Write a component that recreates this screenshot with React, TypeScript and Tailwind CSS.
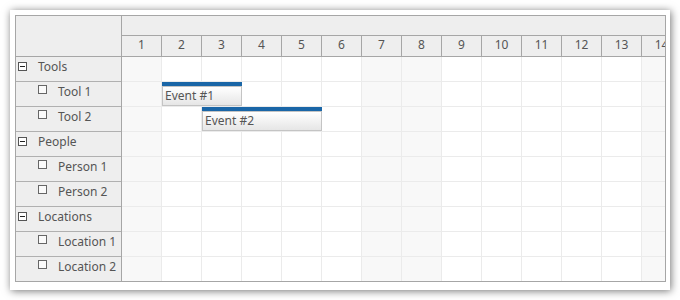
const days = [1, 2, 3, 4, 5, 6, 7, 8, 9, 10, 11, 12, 13, 14];
const weekend = [1, 7, 8, 14];

type Row = { name: string; group?: boolean };

const rows: Row[] = [
  { name: "Tools", group: true },
  { name: "Tool 1" },
  { name: "Tool 2" },
  { name: "People", group: true },
  { name: "Person 1" },
  { name: "Person 2" },
  { name: "Locations", group: true },
  { name: "Location 1" },
  { name: "Location 2" },
];

const events = [
  { text: "Event #1", row: 1, start: 1, days: 2 },
  { text: "Event #2", row: 2, start: 2, days: 3 },
];

function Collapse() {
  return (
    <svg width="9" height="9" viewBox="0 0 9 9" className="mt-[5px] shrink-0">
      <rect x="0.5" y="0.5" width="8" height="8" fill="#fff" stroke="#555" />
      <line x1="2" y1="4.5" x2="7" y2="4.5" stroke="#222" />
    </svg>
  );
}

function Leaf() {
  return (
    <svg width="9" height="9" viewBox="0 0 9 9" className="mt-[3px] shrink-0">
      <rect x="0.5" y="0.5" width="8" height="8" fill="#fafafa" stroke="#666" />
    </svg>
  );
}

export default function App() {
  return (
    <div className="min-h-screen bg-white pt-[10px] pl-[10px]">
      <div className="w-fit bg-white pl-[5px] pt-[5px] pr-[4px] pb-[8px] shadow-[1px_1px_8px_rgba(0,0,0,0.55)]">
        <div className="flex w-[651px] overflow-hidden border border-[#a6a6a6] font-['Noto_Sans',sans-serif] text-[12px] leading-[16px] text-[#555]">
          {/* row headers */}
          <div className="w-[106px] shrink-0 border-r border-[#a6a6a6] bg-[#eeeeee]">
            <div className="h-[41px] border-b border-[#a6a6a6]" />
            {rows.map((r, i) => (
              <div
                key={r.name}
                className={
                  i === rows.length - 1
                    ? "flex h-[24px] items-start"
                    : "flex h-[25px] items-start border-b border-[#b0b0b0]"
                }
              >
                {r.group ? (
                  <div className="flex pl-[2px]">
                    <Collapse />
                    <span className="ml-[11px] pt-[2px]">{r.name}</span>
                  </div>
                ) : (
                  <div className="flex pl-[22px]">
                    <Leaf />
                    <span className="ml-[11px] pt-[2px]">{r.name}</span>
                  </div>
                )}
              </div>
            ))}
          </div>

          {/* timeline */}
          <div className="min-w-0 flex-1 overflow-hidden">
            <div className="h-[20px] w-[560px] border-b border-[#a6a6a6] bg-[#eeeeee]" />
            <div className="flex h-[21px] w-[560px] border-b border-[#a6a6a6] bg-[#eeeeee]">
              {days.map((d) => (
                <div key={d} className="w-[40px] shrink-0 border-r border-[#a6a6a6] pt-[1px] text-center">
                  {d}
                </div>
              ))}
            </div>
            <div className="relative w-[560px]">
              {rows.map((r, i) => (
                <div
                  key={r.name}
                  className={
                    i === rows.length - 1
                      ? "flex h-[24px]"
                      : "flex h-[25px] border-b border-[#ebebeb]"
                  }
                >
                  {days.map((d) => (
                    <div
                      key={d}
                      className={
                        weekend.includes(d)
                          ? "w-[40px] shrink-0 border-r border-[#ebebeb] bg-[#f8f8f8]"
                          : "w-[40px] shrink-0 border-r border-[#ebebeb] bg-white"
                      }
                    />
                  ))}
                </div>
              ))}
              {events.map((e) => (
                <div
                  key={e.text}
                  className="absolute flex flex-col"
                  style={{ left: e.start * 40, top: e.row * 25, width: e.days * 40 }}
                >
                  <div className="h-[4px] bg-[#1a66a7]" />
                  <div className="h-[20px] border border-[#c4c4c4] bg-gradient-to-b from-white to-[#e6e6e6] pl-[2px] pt-[1px] leading-[16px] text-[#555]">
                    {e.text}
                  </div>
                </div>
              ))}
            </div>
          </div>
        </div>
      </div>
    </div>
  );
}
